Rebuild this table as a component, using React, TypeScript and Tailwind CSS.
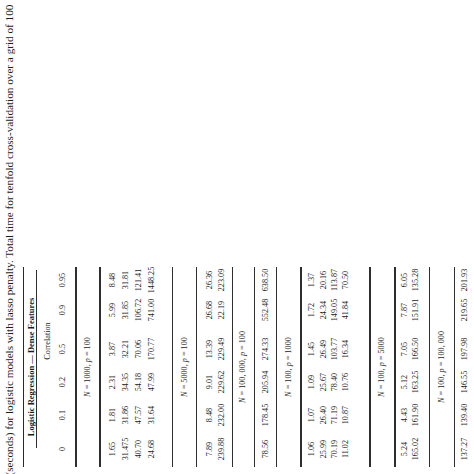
import type { ReactNode } from "react";

interface Section {
  label: ReactNode;
  ruleGap: string;
  labelGap: string;
  afterLabelGap: string;
  dataGap: string;
  rowHeight: string;
  rows: string[][];
}

const cols = "grid grid-cols-[36px_32px_34px_32px_46px_14px] ml-[7px]";

const sections: Section[] = [
  {
    label: (
      <>
        <i>N</i> = 1000, <i>p</i> = 100
      </>
    ),
    ruleGap: "mt-[6.3px]",
    labelGap: "mt-[5.2px]",
    afterLabelGap: "mt-[5.3px]",
    dataGap: "mt-[5.7px]",
    rowHeight: "h-[13px] leading-[13px]",
    rows: [
      ["1.65", "1.81", "2.31", "3.87", "5.99", "8.48"],
      ["31.475", "31.86", "34.35", "32.21", "31.85", "31.81"],
      ["40.70", "47.57", "54.18", "70.06", "106.72", "121.41"],
      ["24.68", "31.64", "47.99", "170.77", "741.00", "1448.25"],
    ],
  },
  {
    label: (
      <>
        <i>N</i> = 5000, <i>p</i> = 100
      </>
    ),
    ruleGap: "mt-[13.8px]",
    labelGap: "mt-[5.2px]",
    afterLabelGap: "mt-[5.3px]",
    dataGap: "mt-[7.2px]",
    rowHeight: "h-[12px] leading-[12px]",
    rows: [
      ["7.89", "8.48", "9.01", "13.39", "26.68", "26.36"],
      ["239.88", "232.00", "229.62", "229.49", "22.19", "223.09"],
    ],
  },
  {
    label: (
      <>
        <i>N</i> = 100, 000, <i>p</i> = 100
      </>
    ),
    ruleGap: "mt-[3.3px]",
    labelGap: "mt-[4.2px]",
    afterLabelGap: "mt-[4.3px]",
    dataGap: "mt-[5.2px]",
    rowHeight: "h-[12px] leading-[12px]",
    rows: [["78.56", "178.45", "205.94", "274.33", "552.48", "638.50"]],
  },
  {
    label: (
      <>
        <i>N</i> = 100, <i>p</i> = 1000
      </>
    ),
    ruleGap: "mt-[3.3px]",
    labelGap: "mt-[6.2px]",
    afterLabelGap: "mt-[5.3px]",
    dataGap: "mt-[4.7px]",
    rowHeight: "h-[11.33px] leading-[11.33px]",
    rows: [
      ["1.06", "1.07", "1.09", "1.45", "1.72", "1.37"],
      ["25.99", "26.40", "25.67", "26.49", "24.34", "20.16"],
      ["70.19", "71.19", "78.40", "103.77", "149.05", "113.87"],
      ["11.02", "10.87", "10.76", "16.34", "41.84", "70.50"],
    ],
  },
  {
    label: (
      <>
        <i>N</i> = 100, <i>p</i> = 5000
      </>
    ),
    ruleGap: "mt-[17.5px]",
    labelGap: "mt-[5.2px]",
    afterLabelGap: "mt-[6.3px]",
    dataGap: "mt-[3.7px]",
    rowHeight: "h-[11px] leading-[11px]",
    rows: [
      ["5.24", "4.43", "5.12", "7.05", "7.87", "6.05"],
      ["165.02", "161.90", "163.25", "166.50", "151.91", "135.28"],
    ],
  },
  {
    label: (
      <>
        <i>N</i> = 100, <i>p</i> = 100, 000
      </>
    ),
    ruleGap: "mt-[7.8px]",
    labelGap: "mt-[5.2px]",
    afterLabelGap: "mt-[6.3px]",
    dataGap: "mt-[4.2px]",
    rowHeight: "h-[12px] leading-[12px]",
    rows: [["137.27", "139.40", "146.55", "197.98", "219.65", "201.93"]],
  },
];

const Rule = ({ gap }: { gap: string }) => (
  <div className={`${gap} ml-[7px] w-[200px] h-[1.4px] shrink-0 bg-[#2e2e2e]`} />
);

const Cells = ({ values, height }: { values: string[]; height: string }) => (
  <div className={`${cols} ${height} shrink-0`}>
    {values.map((v, i) => (
      <div key={i} className="flex justify-center whitespace-nowrap">
        {v}
      </div>
    ))}
  </div>
);

export default function App() {
  return (
    <div className="w-[474px] h-[474px] overflow-hidden bg-white">
      <div className="w-[474px] h-[474px] -rotate-90 flex flex-col text-[#1c1c1c] font-['Liberation_Serif','Times_New_Roman',serif] text-[8.2px]">
        <p className="h-[19px] leading-[19px] text-[11.2px] whitespace-nowrap -ml-[1.5px] shrink-0">
          (seconds) for logistic models with lasso penalty. Total time for tenfold cross-validation over a grid of 100
        </p>
        <div className="mt-[3.5px] ml-[7px] w-[200px] h-[1.6px] shrink-0 bg-[#2a2a2a]" />
        <div className="mt-[2.4px] ml-[7px] w-[200px] h-[10px] leading-[10px] text-center font-bold text-[8.5px] shrink-0">
          Logistic Regression — Dense Features
        </div>
        <div className="ml-[26px] w-[178px] h-[0.9px] shrink-0 bg-[#2e2e2e]" />
        <div className="mt-[4.6px] ml-[43px] w-[180px] h-[12px] leading-[12px] text-center shrink-0">
          Correlation
        </div>
        <div className="mt-[3px]">
          <Cells values={["0", "0.1", "0.2", "0.5", "0.9", "0.95"]} height="h-[12px] leading-[12px]" />
        </div>
        {sections.map((s, i) => (
          <div key={i} className="flex flex-col shrink-0">
            <Rule gap={s.ruleGap} />
            <div className={`${s.labelGap} ml-[7px] w-[200px] h-[12px] leading-[12px] text-center whitespace-nowrap`}>
              {s.label}
            </div>
            <Rule gap={s.afterLabelGap} />
            <div className={`${s.dataGap} flex flex-col`}>
              {s.rows.map((r, j) => (
                <Cells key={j} values={r} height={s.rowHeight} />
              ))}
            </div>
          </div>
        ))}
      </div>
    </div>
  );
}
